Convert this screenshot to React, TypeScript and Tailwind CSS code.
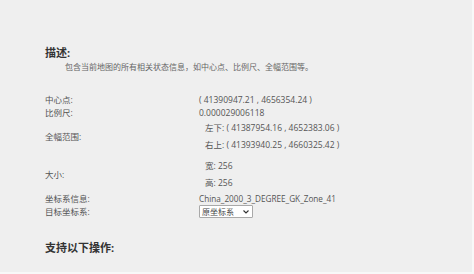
import React from "react";

const font = { fontFamily: '"Open Sans", "Noto Sans CJK SC", sans-serif' };

function Row({ label, children, h = "h-[13px]" }: { label: string; children: React.ReactNode; h?: string }) {
  return (
    <div className={`flex items-center ${h}`}>
      <div className="w-[154px] shrink-0">{label}</div>
      <div>{children}</div>
    </div>
  );
}

export default function App() {
  return (
    <div className="w-[474px] h-[274px] bg-[#f8f8f8] overflow-hidden" style={font}>
      <div className="w-[472px] h-[272px] bg-[#efefef] pl-[45px] pt-[46px] text-[8.5px] text-[#555]">
        <div className="text-[11px] font-bold text-[#333] leading-[14px] h-[14px]">描述:</div>
        <div className="pl-[20px] leading-[12px] h-[12px] mt-[1px] text-[8px] text-[#666]">
          包含当前地图的所有相关状态信息，如中心点、比例尺、全幅范围等。
        </div>
        <div className="mt-[20px] leading-[13px]">
          <Row label="中心点:">( 41390947.21 , 4656354.24 )</Row>
          <Row label="比例尺:">0.000029006118</Row>
          <div className="flex items-center h-[34px]">
            <div className="w-[154px] shrink-0">全幅范围:</div>
            <div className="pl-[6px]">
              <div className="h-[17px] flex items-center">左下:&nbsp;( 41387954.16 , 4652383.06 )</div>
              <div className="h-[17px] flex items-center">右上:&nbsp;( 41393940.25 , 4660325.42 )</div>
            </div>
          </div>
          <div className="flex items-center h-[34px] mt-[4px]">
            <div className="w-[154px] shrink-0">大小:</div>
            <div className="pl-[6px]">
              <div className="h-[17px] flex items-center">宽:&nbsp;256</div>
              <div className="h-[17px] flex items-center">高:&nbsp;256</div>
            </div>
          </div>
          <div className="mt-[1px]">
            <Row label="坐标系信息:"><span className="text-[8.2px]">China_2000_3_DEGREE_GK_Zone_41</span></Row>
            <Row label="目标坐标系:">
              <div className="w-[54px] h-[13px] bg-white border border-[#a9a9a9] rounded-[1px] flex items-center justify-between pl-[2px] pr-[3px] text-[8px] text-[#444]">
                <span>原坐标系</span>
                <svg width="6" height="4" viewBox="0 0 6 4"><path d="M0.5 0.5 L3 3 L5.5 0.5" fill="none" stroke="#333" strokeWidth="1.1" /></svg>
              </div>
            </Row>
          </div>
        </div>
        <div className="mt-[23px] text-[11px] font-bold text-[#333] leading-[14px]">支持以下操作:</div>
      </div>
    </div>
  );
}
